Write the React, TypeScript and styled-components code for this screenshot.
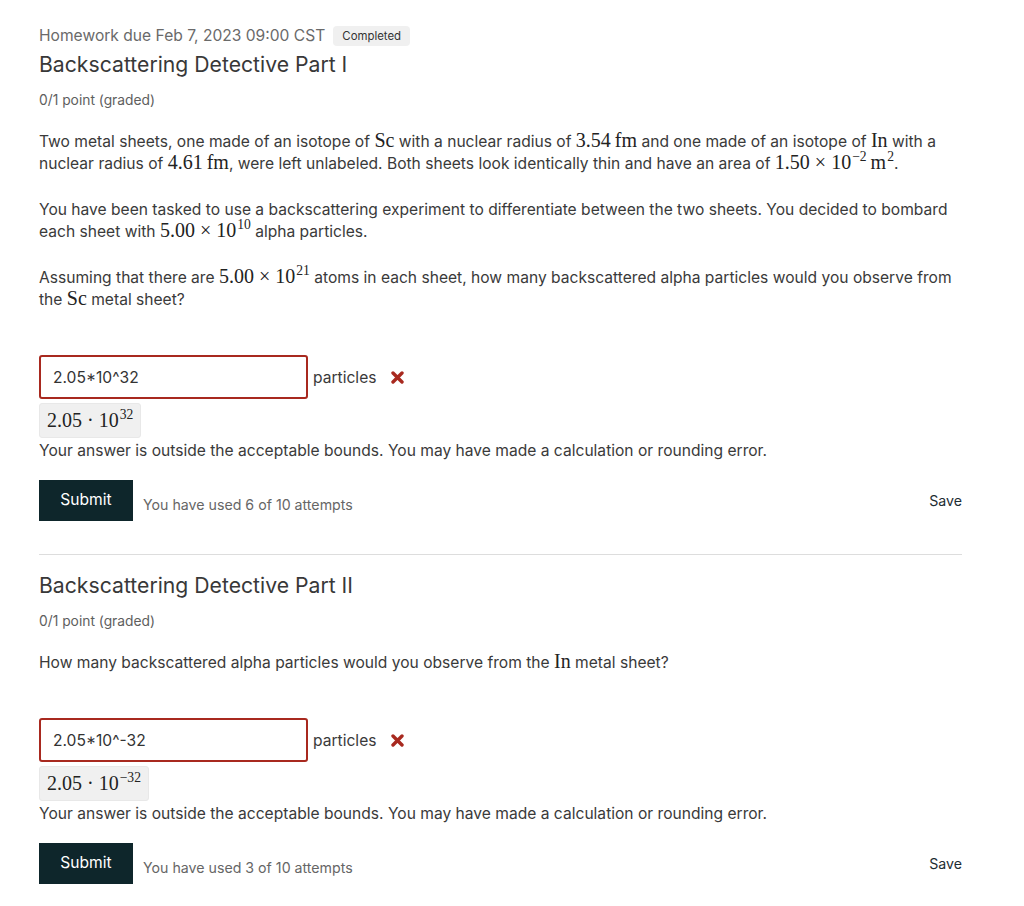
import React from "react";
import styled, { createGlobalStyle } from "styled-components";

const GlobalStyle = createGlobalStyle`
  html, body { margin: 0; padding: 0; background: #ffffff; }
  body {
    font-family: Inter, "Noto Sans", "Liberation Sans", sans-serif;
    color: #3a3a3a;
    -webkit-font-smoothing: antialiased;
  }
  * { box-sizing: border-box; }
`;

const Page = styled.main`
  width: 1024px;
  padding: 25px 62px 20px 39px;
`;

const Header = styled.div`
  display: flex;
  align-items: center;
  gap: 8px;
  height: 22px;
`;

const DueText = styled.span`
  font-size: 15.6px;
  color: #6a6a6a;
  line-height: 22px;
`;

const Badge = styled.span`
  font-size: 11.4px;
  line-height: 20px;
  height: 20px;
  padding: 0 9px;
  border-radius: 4px;
  background: #f0f0f0;
  color: #333333;
`;

const Title = styled.h2<{ $first?: boolean }>`
  margin: ${(p) => (p.$first ? "3px" : "16px")} 0 0;
  font-size: 21.2px;
  font-weight: 400;
  line-height: 28px;
  color: #383838;
`;

const Points = styled.div`
  margin-top: 13px;
  font-size: 13.8px;
  line-height: 18px;
  color: #5e5e5e;
`;

const Body = styled.div`
  margin-top: 22px;
`;

const Para = styled.p`
  margin: 0 0 24px;
  font-size: 15.6px;
  line-height: 22px;
  color: #3a3a3a;
  &:last-child { margin-bottom: 0; }
`;

const M = styled.span`
  font-family: "Liberation Serif", "DejaVu Serif", serif;
  font-size: 20px;
  line-height: 0;
  white-space: nowrap;
  color: #222222;
`;

const Sup = styled.sup`
  font-size: 0.68em;
  line-height: 0;
  vertical-align: 0.58em;
  margin-left: 1px;
`;

const Op = styled.span`
  margin: 0 5px;
`;

const AnswerArea = styled.div`
  margin-top: 44px;
`;

const InputRow = styled.div`
  display: flex;
  align-items: center;
  gap: 5px;
`;

const AnswerInput = styled.input`
  width: 269px;
  height: 44px;
  border: 2px solid #a8291f;
  border-radius: 3px;
  padding: 0 12px;
  font-family: Inter, "Noto Sans", sans-serif;
  font-size: 15.6px;
  color: #333333;
  background: #ffffff;
  outline: none;
`;

const Unit = styled.span`
  font-size: 15.6px;
  color: #3a3a3a;
`;

const WrongIcon = styled.svg`
  width: 13px;
  height: 13px;
  margin-left: 10px;
`;

const Preview = styled.div`
  margin-top: 4px;
  display: inline-flex;
  align-items: center;
  height: 35px;
  padding: 0 7px;
  background: #f0f0f0;
  border: 1px solid #e8e8e8;
  border-radius: 3px;
  font-family: "Liberation Serif", "DejaVu Serif", serif;
  font-size: 20px;
  color: #222222;
`;

const ErrorMsg = styled.div`
  margin-top: 2px;
  font-size: 15.6px;
  line-height: 22px;
  color: #3a3a3a;
`;

const ActionRow = styled.div`
  margin-top: 18px;
  display: flex;
  align-items: flex-end;
`;

const SubmitButton = styled.button`
  width: 94px;
  height: 41px;
  border: none;
  border-radius: 0;
  background: #0e262b;
  color: #ffffff;
  font-family: Inter, "Noto Sans", sans-serif;
  font-size: 15.6px;
  font-weight: 400;
  padding: 0 0 2px;
  cursor: pointer;
`;

const Attempts = styled.span`
  margin-left: 10px;
  padding-bottom: 5px;
  font-size: 14.2px;
  line-height: 22px;
  color: #666666;
`;

const SaveButton = styled.button`
  margin-left: auto;
  align-self: center;
  border: none;
  background: none;
  padding: 0;
  font-family: Inter, "Noto Sans", sans-serif;
  font-size: 14.2px;
  font-weight: 400;
  color: #1d2d33;
  cursor: pointer;
`;

const Divider = styled.hr`
  margin: 33px 0 0;
  border: none;
  border-top: 1px solid #dddddd;
`;

const Cross = () => (
  <WrongIcon viewBox="0 0 13 13">
    <path d="M2 2 L11 11 M11 2 L2 11" stroke="#a8291f" strokeWidth="3.4" strokeLinecap="round" />
  </WrongIcon>
);

type AnswerProps = {
  value: string;
  preview: React.ReactNode;
  attempts: string;
};

const Answer = ({ value, preview, attempts }: AnswerProps) => (
  <>
    <AnswerArea>
      <InputRow>
        <AnswerInput defaultValue={value} readOnly />
        <Unit>particles</Unit>
        <Cross />
      </InputRow>
      <Preview>{preview}</Preview>
      <ErrorMsg>
        Your answer is outside the acceptable bounds. You may have made a calculation or rounding error.
      </ErrorMsg>
    </AnswerArea>
    <ActionRow>
      <SubmitButton>Submit</SubmitButton>
      <Attempts>{attempts}</Attempts>
      <SaveButton>Save</SaveButton>
    </ActionRow>
  </>
);

export default function App() {
  return (
    <Page>
      <GlobalStyle />
      <Header>
        <DueText>Homework due Feb 7, 2023 09:00 CST</DueText>
        <Badge>Completed</Badge>
      </Header>
      <Title $first>Backscattering Detective Part I</Title>
      <Points>0/1 point (graded)</Points>
      <Body>
        <Para>
          Two metal sheets, one made of an isotope of <M>Sc</M> with a nuclear radius of{" "}
          <M>3.54&#8201;fm</M> and one made of an isotope of <M>In</M> with a nuclear radius of{" "}
          <M>4.61&#8201;fm</M>, were left unlabeled. Both sheets look identically thin and have an area of{" "}
          <M>
            1.50<Op>×</Op>10<Sup>−2</Sup>&#8201;m<Sup>2</Sup>
          </M>
          .
        </Para>
        <Para>
          You have been tasked to use a backscattering experiment to differentiate between the two sheets. You
          decided to bombard each sheet with{" "}
          <M>
            5.00<Op>×</Op>10<Sup>10</Sup>
          </M>{" "}
          alpha particles.
        </Para>
        <Para>
          Assuming that there are{" "}
          <M>
            5.00<Op>×</Op>10<Sup>21</Sup>
          </M>{" "}
          atoms in each sheet, how many backscattered alpha particles would you observe from the <M>Sc</M> metal
          sheet?
        </Para>
      </Body>
      <Answer
        value="2.05*10^32"
        preview={
          <span>
            2.05<Op>·</Op>10<Sup>32</Sup>
          </span>
        }
        attempts="You have used 6 of 10 attempts"
      />

      <Divider />

      <Title>Backscattering Detective Part II</Title>
      <Points>0/1 point (graded)</Points>
      <Body>
        <Para>
          How many backscattered alpha particles would you observe from the <M>In</M> metal sheet?
        </Para>
      </Body>
      <Answer
        value="2.05*10^-32"
        preview={
          <span>
            2.05<Op>·</Op>10<Sup>−32</Sup>
          </span>
        }
        attempts="You have used 3 of 10 attempts"
      />
    </Page>
  );
}
